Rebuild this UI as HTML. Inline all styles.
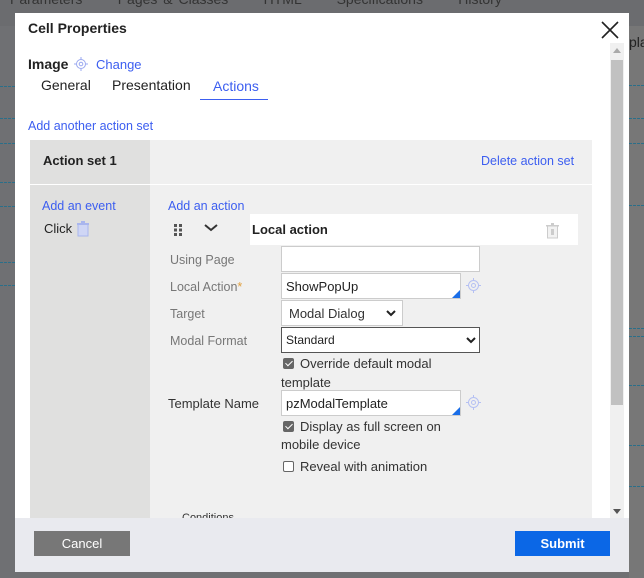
<!DOCTYPE html>
<html><head><style>
*{box-sizing:border-box;margin:0;padding:0}
body{width:644px;height:578px;overflow:hidden;background:#6f7073;font-family:"Liberation Sans",sans-serif;font-size:13px;color:#222;position:relative}
.a{position:absolute}
.link{color:#3c5ef0}
.lbl{color:#777;font-size:12.5px}
input.f{position:absolute;height:26px;border:1px solid #ccc;background:#fff;font:13px "Liberation Sans",sans-serif;padding-left:4px;color:#222}
.tri{position:absolute;right:0;bottom:0;width:0;height:0;border-left:8px solid transparent;border-bottom:8px solid #1a6ee8}
.cb{position:absolute;width:11px;height:11px;border:1px solid #666;border-radius:2px;background:#fff}
.cb.on{background:#666}
.cb.on:after{content:"";position:absolute;left:3px;top:0px;width:3px;height:6px;border:solid #fff;border-width:0 1.5px 1.5px 0;transform:rotate(45deg)}
.dash{position:absolute;left:0;width:15px;border-top:1px dashed #2a6f8a}
.dashr{position:absolute;left:629px;width:15px;border-top:1px dashed #2a6f8a}
</style></head><body>
<div class="a" style="left:0;top:0;width:644px;height:26px;background:#6b6c6f"></div>
<div class="a" style="left:10px;top:-9px;color:#333;font-size:14px;white-space:nowrap;word-spacing:2px">Parameters &nbsp;&nbsp;&nbsp;&nbsp; Pages &amp; Classes &nbsp;&nbsp;&nbsp;&nbsp; HTML &nbsp;&nbsp;&nbsp;&nbsp; Specifications &nbsp;&nbsp;&nbsp;&nbsp; History</div>
<div class="a" style="left:629px;top:26px;width:15px;height:552px;background:#777"></div>
<div class="a" style="left:629px;top:34px;color:#222;font-size:14px">pla</div>
<div class="dash" style="top:86px"></div><div class="dash" style="top:118px"></div><div class="dash" style="top:143px"></div><div class="dash" style="top:182px"></div><div class="dash" style="top:206px"></div><div class="dash" style="top:262px"></div><div class="dash" style="top:285px"></div>
<div class="dashr" style="top:85px"></div><div class="dashr" style="top:118px"></div><div class="dashr" style="top:143px"></div><div class="dashr" style="top:205px"></div><div class="dashr" style="top:328px"></div><div class="dashr" style="top:336px"></div><div class="dashr" style="top:385px"></div><div class="dashr" style="top:445px"></div><div class="dashr" style="top:486px"></div>

<div class="a" style="left:15px;top:13px;width:614px;height:559px;background:#fff">
 <div class="a" style="left:13px;top:7px;font-weight:bold;font-size:14px">Cell Properties</div>
 <svg class="a" style="left:585px;top:7px" width="20" height="20"><path d="M2 2L18 18M18 2L2 18" stroke="#222" stroke-width="1.6"/></svg>
 <div class="a" style="left:595px;top:30px;width:14px;height:475px;background:#f0f0f0"></div>
 <div class="a" style="left:596px;top:47px;width:12px;height:345px;background:#c1c1c1"></div>
 <div class="a" style="left:598px;top:35px;width:0;height:0;border:4px solid transparent;border-bottom:5px solid #aaa;border-top:0"></div>
 <div class="a" style="left:598px;top:496px;width:0;height:0;border:4px solid transparent;border-top:5px solid #555;border-bottom:0"></div>

 <div class="a" style="left:13px;top:43px;font-weight:bold;font-size:14px">Image</div>
 <svg class="a" style="left:59px;top:44px" width="14" height="14"><circle cx="7" cy="7" r="4.5" fill="none" stroke="#9aa8f0"/><circle cx="7" cy="7" r="1.8" fill="none" stroke="#9aa8f0"/><path d="M7 0v2M7 12v2M0 7h2M12 7h2" stroke="#9aa8f0"/></svg>
 <div class="a link" style="left:81px;top:44px">Change</div>
 <div class="a" style="left:26px;top:64px;font-size:14px">General</div>
 <div class="a" style="left:97px;top:64px;font-size:14px">Presentation</div>
 <div class="a link" style="left:198px;top:65px;font-size:14px">Actions</div>
 <div class="a" style="left:185px;top:86px;width:68px;height:1px;background:#3c5ef0"></div>
 <div class="a link" style="left:13px;top:106px;font-size:12.5px">Add another action set</div>

 <div class="a" style="left:15px;top:127px;width:562px;height:378px;background:#f0f0f0"></div>
 <div class="a" style="left:15px;top:127px;width:120px;height:378px;background:#e0e0df"></div>
 <div class="a" style="left:15px;top:171px;width:562px;height:1px;background:#fff"></div>
 <div class="a" style="left:28px;top:140px;font-weight:bold">Action set 1</div>
 <div class="a link" style="left:466px;top:141px;font-size:12.5px">Delete action set</div>
 <div class="a link" style="left:27px;top:186px;font-size:12.5px">Add an event</div>
 <div class="a" style="left:29px;top:208px">Click</div>
 <svg class="a" style="left:62px;top:208px" width="12" height="16"><rect x="1" y="3" width="10" height="12" fill="#cfd6f5" stroke="#a9b6ee"/><rect x="0" y="2" width="12" height="2" fill="#a9b6ee"/><rect x="4" y="0" width="4" height="2" fill="#a9b6ee"/></svg>

 <div class="a link" style="left:153px;top:186px;font-size:12.5px">Add an action</div>
 <div class="a" style="left:235px;top:201px;width:328px;height:31px;background:#fff"></div>
 <svg class="a" style="left:159px;top:211px" width="8" height="12"><g fill="#555"><rect x="0" y="0" width="3" height="3"/><rect x="5" y="0" width="3" height="3"/><rect x="0" y="4.5" width="3" height="3"/><rect x="5" y="4.5" width="3" height="3"/><rect x="0" y="9" width="3" height="3"/><rect x="5" y="9" width="3" height="3"/></g></svg>
 <svg class="a" style="left:189px;top:211px" width="14" height="8"><path d="M1 1l6 5 6-5" fill="none" stroke="#333" stroke-width="2"/></svg>
 <div class="a" style="left:237px;top:209px;font-weight:bold">Local action</div>
 <svg class="a" style="left:531px;top:210px" width="13" height="16"><rect x="1.5" y="3" width="10" height="12" fill="#f2f2f2" stroke="#ccc"/><rect x="0" y="2" width="13" height="1.5" fill="#ccc"/><rect x="5" y="0" width="3" height="2" fill="#ccc"/><rect x="5" y="6" width="3" height="6" fill="#ccc"/></svg>

 <div class="a lbl" style="left:155px;top:240px">Using Page</div>
 <input class="f" style="left:266px;top:233px;width:199px"/>
 <div class="a lbl" style="left:155px;top:267px">Local Action<span style="color:#e0a040">*</span></div>
 <div class="a" style="left:266px;top:260px;width:180px;height:26px;border:1px solid #ccc;background:#fff;padding:5px 4px;font-size:13px">ShowPopUp<div class="tri"></div></div>
 <svg class="a" style="left:451px;top:265px" width="15" height="15"><circle cx="7.5" cy="7.5" r="5" fill="none" stroke="#b5c0f3"/><circle cx="7.5" cy="7.5" r="2" fill="none" stroke="#b5c0f3"/><path d="M7.5 0v2.5M7.5 12.5v2.5M0 7.5h2.5M12.5 7.5h2.5" stroke="#b5c0f3"/></svg>
 <div class="a lbl" style="left:155px;top:294px">Target</div>
 <div class="a" style="left:266px;top:287px;width:122px;height:26px;border:1px solid #ccc;background:#fff;padding:5px 7px;font-size:13px;color:#333">Modal Dialog</div>
 <svg class="a" style="left:371px;top:297px" width="10" height="7"><path d="M1 1l4 4 4-4" fill="none" stroke="#222" stroke-width="2"/></svg>
 <div class="a lbl" style="left:155px;top:321px">Modal Format</div>
 <div class="a" style="left:266px;top:314px;width:199px;height:26px;border:1px solid #555;background:#fff;padding:5px 4px;font-size:12px">Standard</div>
 <svg class="a" style="left:451px;top:324px" width="10" height="7"><path d="M1 1l4 4 4-4" fill="none" stroke="#222" stroke-width="2"/></svg>
 <div class="cb on" style="left:268px;top:345px"></div>
 <div class="a" style="left:285px;top:343px;color:#333">Override default modal</div>
 <div class="a" style="left:266px;top:362px;color:#333">template</div>
 <div class="a" style="left:153px;top:383px;color:#333">Template Name</div>
 <div class="a" style="left:266px;top:377px;width:180px;height:26px;border:1px solid #ccc;background:#fff;padding:5px 4px;font-size:13px">pzModalTemplate<div class="tri"></div></div>
 <svg class="a" style="left:451px;top:382px" width="15" height="15"><circle cx="7.5" cy="7.5" r="5" fill="none" stroke="#b5c0f3"/><circle cx="7.5" cy="7.5" r="2" fill="none" stroke="#b5c0f3"/><path d="M7.5 0v2.5M7.5 12.5v2.5M0 7.5h2.5M12.5 7.5h2.5" stroke="#b5c0f3"/></svg>
 <div class="cb on" style="left:268px;top:408px"></div>
 <div class="a" style="left:285px;top:406px;color:#333">Display as full screen on</div>
 <div class="a" style="left:266px;top:424px;color:#333">mobile device</div>
 <div class="cb" style="left:268px;top:448px"></div>
 <div class="a" style="left:285px;top:446px;color:#333">Reveal with animation</div>
 <div class="a" style="left:167px;top:499px;font-size:11px;color:#333">Conditions</div>

 <div class="a" style="left:0;top:505px;width:614px;height:54px;background:#e9eaef"></div>
 <div class="a" style="left:19px;top:518px;width:96px;height:25px;background:#777;color:#fff;text-align:center;line-height:25px">Cancel</div>
 <div class="a" style="left:500px;top:518px;width:95px;height:25px;background:#0b67e6;color:#fff;text-align:center;line-height:25px;font-weight:bold">Submit</div>
</div>
</body></html>
